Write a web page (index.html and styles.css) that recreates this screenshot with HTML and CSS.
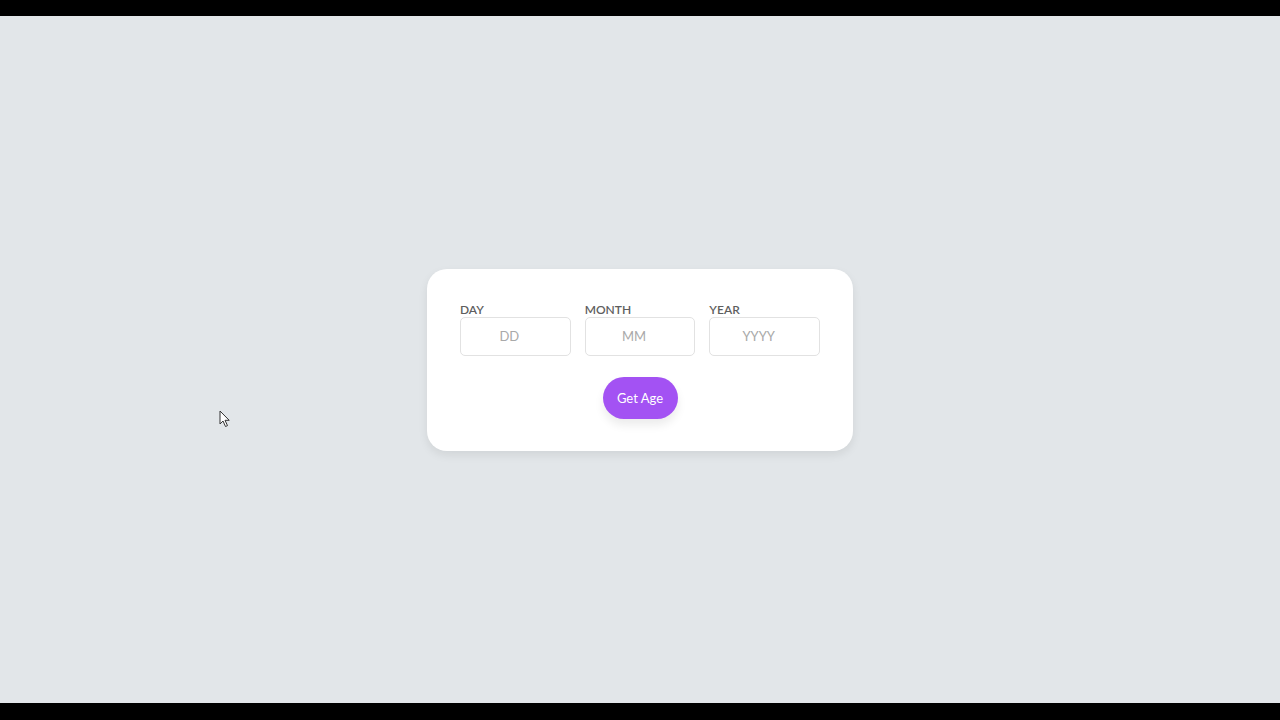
FILE: index.html
```html
<!DOCTYPE html>
<html>
<head>
<meta charset="utf-8">
<link rel="stylesheet" href="styles.css">
</head>
<body>
<div class="bar"></div>
<main class="stage">
  <div class="card">
    <div class="fields">
      <label class="field">
        <span class="label">DAY</span>
        <input class="input" type="text" placeholder="DD">
      </label>
      <label class="field">
        <span class="label">MONTH</span>
        <input class="input" type="text" placeholder="MM">
      </label>
      <label class="field">
        <span class="label">YEAR</span>
        <input class="input" type="text" placeholder="YYYY">
      </label>
    </div>
    <button class="btn">Get Age</button>
  </div>
  <svg class="cursor" width="12" height="18" viewBox="0 0 12 18">
    <path d="M1 1 L1 14 L4 11 L6.5 16.5 L8.5 15.6 L6 10.3 L10.2 10.3 Z" fill="#fff" stroke="#333" stroke-width="1" stroke-linejoin="round"/>
  </svg>
</main>
<div class="bar bar-bottom"></div>
</body>
</html>
```
FILE: styles.css
```css
* { box-sizing: border-box; }
html, body { margin: 0; padding: 0; height: 100%; }
body {
  display: flex;
  flex-direction: column;
  background: #000;
  font-family: Lato, "Noto Sans", sans-serif;
}
.bar { height: 16px; background: #000; flex: none; }
.bar-bottom { height: 17px; }
.stage {
  flex: 1;
  background: #e2e6e9;
  display: flex;
  align-items: center;
  justify-content: center;
  position: relative;
}
.card {
  width: 426px;
  height: 182px;
  background: #fff;
  border-radius: 20px;
  box-shadow: 0 4px 10px rgba(0,0,0,0.08);
  padding: 34px 33px 32px;
  display: flex;
  flex-direction: column;
  align-items: center;
}
.fields {
  display: flex;
  gap: 14px;
  width: 100%;
}
.field {
  display: flex;
  flex-direction: column;
  gap: 0;
  flex: 1;
}
.label {
  font-size: 12px;
  font-weight: 600;
  color: #5e5e5e;
  line-height: 14px;
}
.input {
  width: 100%;
  height: 39px;
  border: 1px solid #e2e2e2;
  border-radius: 5px;
  font-family: Lato, "Noto Sans", sans-serif;
  font-size: 13px;
  text-align: center;
  color: #333;
  outline: none;
  padding: 0 12px 0 0;
}
.input::placeholder { color: #a9a9a9; }
.btn {
  margin-top: 21px;
  width: 75px;
  height: 43px;
  border: none;
  border-radius: 22px;
  background: #a352f3;
  color: #fff;
  font-family: Lato, "Noto Sans", sans-serif;
  font-size: 13px;
  box-shadow: 0 6px 10px rgba(0,0,0,0.08);
  cursor: pointer;
}
.cursor {
  position: absolute;
  left: 219px;
  top: 394px;
}
```
